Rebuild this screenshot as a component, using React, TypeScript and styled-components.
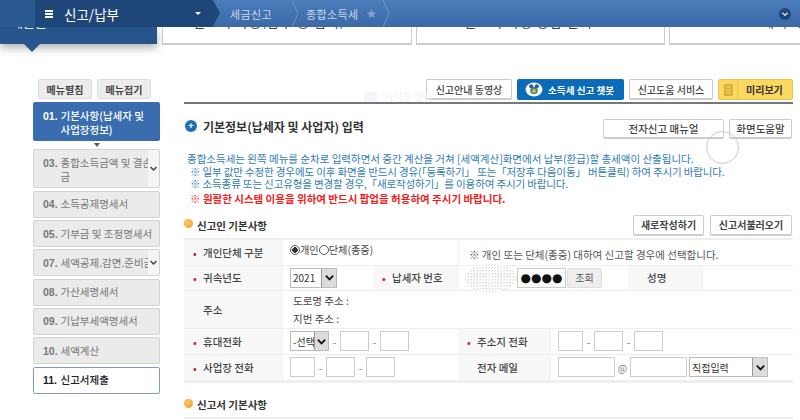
import React from "react";
import styled, { createGlobalStyle } from "styled-components";

const Global = createGlobalStyle`
  html, body { margin: 0; padding: 0; background: #fff; }
  body { font-family: "Noto Sans CJK KR", "Noto Sans", sans-serif; color: #333; }
  * { box-sizing: border-box; }
`;

const Page = styled.div`
  position: relative;
  width: 800px;
  height: 420px;
  overflow: hidden;
  background: #fff;
`;

const TopBar = styled.header`
  height: 27px;
  display: flex;
  align-items: center;
  background: linear-gradient(#4a7dba, #3a69a6);
  color: #fff;
  position: relative;
  z-index: 2;
`;
const Edge = styled.div`
  width: 35px;
  height: 100%;
  background: #2a5a90;
`;
const MenuTitle = styled.div`
  width: 178px;
  height: 100%;
  padding-left: 10px;
  display: flex;
  align-items: center;
  gap: 11px;
  background: #1f4678;
  font-size: 13.5px;
  position: relative;
  &::after {
    content: "";
    position: absolute;
    left: 178px;
    top: 0;
    border-left: 7px solid #1f4678;
    border-top: 13.5px solid transparent;
    border-bottom: 13.5px solid transparent;
  }
`;
const Burger = styled.span`
  width: 8px;
  height: 8px;
  border-top: 2px solid #fff;
  border-bottom: 2px solid #fff;
  position: relative;
  &::after {
    content: "";
    position: absolute;
    left: 0;
    right: 0;
    top: 1px;
    height: 2px;
    background: #fff;
  }
`;
const Caret = styled.span`
  margin-left: auto;
  margin-right: 12px;
  border-top: 3px solid #fff;
  border-left: 3px solid transparent;
  border-right: 3px solid transparent;
`;
const Crumb = styled.div<{ $w: number; $pad: number }>`
  width: ${(p) => p.$w}px;
  height: 100%;
  display: flex;
  align-items: center;
  padding-left: ${(p) => p.$pad}px;
  gap: 7px;
  color: #c9d8ea;
  font-size: 11px;
  letter-spacing: 0.4px;
  flex: none;
`;
const Sep = styled.svg`
  display: block;
  flex: none;
`;
const ToggleDot = styled.div`
  margin-left: auto;
  margin-right: 9px;
  width: 12px;
  height: 12px;
  border-radius: 50%;
  background: #1f4678;
  display: flex;
  align-items: center;
  justify-content: center;
`;

const StepRow = styled.div`
  height: 18px;
  display: flex;
  gap: 4px;
`;
const BlueStep = styled.div`
  position: relative;
  width: 157px;
  height: 17px;
  flex: none;
  margin-right: 1px;
  background: #27548a;
  box-shadow: 0 4px 8px rgba(0, 0, 0, 0.3);
  color: #fff;
  font-size: 13px;
  &::after {
    content: "";
    position: absolute;
    left: 24px;
    bottom: -8px;
    border-top: 8px solid #27548a;
    border-left: 8px solid transparent;
    border-right: 8px solid transparent;
  }
`;
const Clip = styled.div<{ $pad: number }>`
  height: 100%;
  overflow: hidden;
  line-height: 16px;
  padding-left: ${(p) => p.$pad}px;
  white-space: nowrap;
  & > span {
    display: block;
    margin-top: -13px;
  }
`;
const StepCard = styled.div<{ $w: number }>`
  width: ${(p) => p.$w}px;
  flex: none;
  height: 18px;
  border: 1px solid #ccc;
  border-top: 0;
  border-bottom-width: 2px;
  color: #444;
  font-size: 13px;
  letter-spacing: 1px;
`;

const Body = styled.div`
  display: flex;
  padding-left: 33px;
  gap: 24px;
  margin-top: 34px;
`;
const Sidebar = styled.aside`
  width: 127px;
  flex: none;
`;
const SideTools = styled.div`
  display: flex;
  gap: 5px;
  padding-left: 5px;
  margin-bottom: 2.5px;
`;
const SideTool = styled.div`
  width: 54px;
  height: 20px;
  background: #ececec;
  border: 1px solid #ddd;
  border-radius: 2px;
  display: flex;
  align-items: center;
  justify-content: center;
  font-size: 10px;
  font-weight: 700;
  color: #444;
`;
const MenuList = styled.div`
  display: flex;
  flex-direction: column;
  gap: 2.3px;
`;
const Item = styled.div<{ $kind?: "active" | "current"; $two?: boolean }>`
  position: relative;
  height: ${(p) => (p.$two ? 39 : 27)}px;
  flex: none;
  border-radius: 2px;
  display: flex;
  align-items: center;
  padding-left: 9px;
  padding-top: ${(p) => (p.$two ? 3 : 0)}px;
  overflow: hidden;
  font-size: 10.5px;
  line-height: 14px;
  background: ${(p) => (p.$kind === "active" ? "#3a6cb0" : p.$kind === "current" ? "#fff" : "#ebebeb")};
  border: 1px solid ${(p) => (p.$kind === "active" ? "#3a6cb0" : p.$kind === "current" ? "#7d9ccb" : "#d2d2d2")};
  color: ${(p) => (p.$kind === "active" ? "#fff" : p.$kind === "current" ? "#222" : "#777")};
  ${(p) => (p.$kind === "current" || p.$kind === "active" ? "font-weight:500;" : "")}
`;
const ItemNum = styled.b<{ $two?: boolean }>`
  flex: none;
  width: 17.5px;
  align-self: flex-start;
  margin-top: ${(p) => (p.$two ? 3 : 5.5)}px;
  font-family: "Liberation Sans", sans-serif;
  font-size: 10.5px;
`;
const ItemText = styled.span<{ $nowrap?: boolean; $breakAll?: boolean }>`
  white-space: ${(p) => (p.$nowrap ? "nowrap" : "normal")};
  word-break: ${(p) => (p.$breakAll ? "break-all" : "keep-all")};
  width: 97px;
  flex: none;
`;
const Expand = styled.div`
  position: absolute;
  right: 0;
  top: 0;
  bottom: 0;
  width: 11px;
  background: #f5f5f5;
  display: flex;
  align-items: center;
  justify-content: center;
`;
const DownArrow = styled.div`
  height: 4.4px;
  flex: none;
  display: flex;
  justify-content: center;
  align-items: center;
  &::after {
    content: "";
    border-top: 4px solid #555;
    border-left: 3.5px solid transparent;
    border-right: 3.5px solid transparent;
  }
`;

const Main = styled.main`
  width: 609px;
  flex: none;
`;
const ActionBar = styled.div`
  display: flex;
  justify-content: flex-end;
  gap: 5px;
  padding-bottom: 2px;
  border-bottom: 2px solid #777;
`;
const Btn = styled.div<{ $w: number; $h?: number; $bold?: boolean; $fs?: number }>`
  width: ${(p) => p.$w}px;
  height: ${(p) => p.$h ?? 21}px;
  flex: none;
  display: flex;
  align-items: center;
  justify-content: center;
  background: #fff;
  border: 1px solid #ccc;
  border-bottom-width: 2px;
  border-radius: 2px;
  font-size: ${(p) => p.$fs ?? 10}px;
  font-weight: ${(p) => (p.$bold ? 700 : 500)};
  color: #444;
  white-space: nowrap;
`;
const ChatBtn = styled.div`
  width: 107px;
  height: 21px;
  flex: none;
  display: flex;
  align-items: center;
  gap: 5px;
  padding-left: 8px;
  background: #0a6bb8;
  border-radius: 2px;
  color: #fff;
  font-size: 9.6px;
  font-weight: 700;
  white-space: nowrap;
`;
const PreviewBtn = styled.div`
  width: 75px;
  height: 21px;
  flex: none;
  display: flex;
  align-items: center;
  background: #fbd95f;
  border: 1px solid #e8c34f;
  border-radius: 2px;
  font-size: 10px;
  font-weight: 700;
  color: #333;
`;
const PreviewIcon = styled.div`
  width: 19px;
  height: 100%;
  flex: none;
  display: flex;
  align-items: center;
  justify-content: center;
  border-right: 1px solid #e8c34f;
  margin-right: 8px;
`;

const TitleRow = styled.div`
  display: flex;
  align-items: center;
  height: 40px;
  padding-top: 4px;
`;
const Title = styled.h2`
  margin: 0 0 0 6px;
  font-size: 12px;
  font-weight: 700;
  color: #333;
`;
const BlueBullet = styled.span`
  width: 12px;
  height: 12px;
  margin-left: 1px;
  border-radius: 50%;
  background: #1c6fb4;
  display: flex;
  align-items: center;
  justify-content: center;
  color: #fff;
  font-size: 9px;
  line-height: 1;
  font-weight: 700;
  font-family: "Liberation Sans", sans-serif;
`;
const ManualBtns = styled.div`
  margin-left: auto;
  margin-right: 1px;
  display: flex;
  gap: 5px;
  align-self: flex-start;
  margin-top: 11px;
`;
const Notes = styled.div`
  margin-top: 9px;
  padding-left: 3px;
  font-size: 10.5px;
  line-height: 12.5px;
  color: #2f7cb3;
  white-space: nowrap;
`;
const Note = styled.div<{ $indent?: boolean }>`
  padding-left: ${(p) => (p.$indent ? 3 : 0)}px;
  letter-spacing: ${(p) => (p.$indent ? "-0.14px" : "0")};
`;
const RedNote = styled.div`
  margin-top: 1px;
  padding-left: 3px;
  color: #f01c1c;
  font-weight: 700;
  font-size: 10.5px;
  line-height: 14px;
`;
const SectionRow = styled.div`
  display: flex;
  align-items: center;
  height: 21px;
  margin-top: 9px;
`;
const OrangeBullet = styled.span`
  width: 9px;
  height: 9px;
  border-radius: 50%;
  flex: none;
  background: radial-gradient(circle at 40% 40%, #ffc66a, #ee9a1c);
  margin: -3px 4px 0 0;
`;
const SectionTitle = styled.h3`
  margin: 0;
  font-size: 10.5px;
  font-weight: 700;
  color: #333;
`;
const SectionBtns = styled.div`
  margin-left: auto;
  margin-right: 1px;
  display: flex;
  gap: 6px;
`;
const Table = styled.div`
  margin-top: 2px;
  display: grid;
  grid-template-columns: 98px 91px 85px 92px 78px 74px 91px;
  grid-template-rows: 26px 25px 38px 26px 26px;
  border-top: 2px solid #eee;
  border-bottom: 2px solid #eee;
  font-size: 10.5px;
  color: #444;
`;
const Label = styled.div<{ $plain?: boolean }>`
  display: flex;
  align-items: center;
  background: #f8f8f8;
  border-bottom: 1px solid #eee;
  padding-left: ${(p) => (p.$plain ? 19 : 9)}px;
  font-weight: 500;
  white-space: nowrap;
  color: #444;
`;
const Req = styled.span`
  width: 10px;
  flex: none;
  color: #e0202a;
  font-size: 10px;
  font-weight: 700;
`;
const Cell = styled.div<{ $span?: number; $stack?: boolean; $pad?: number; $gap?: number }>`
  grid-column: span ${(p) => p.$span ?? 1};
  display: flex;
  flex-direction: ${(p) => (p.$stack ? "column" : "row")};
  align-items: ${(p) => (p.$stack ? "flex-start" : "center")};
  justify-content: ${(p) => (p.$stack ? "center" : "flex-start")};
  padding-left: ${(p) => p.$pad ?? 7}px;
  gap: ${(p) => p.$gap ?? 2}px;
  border-bottom: 1px solid #eee;
  border-left: 1px solid #f2f2f2;
  white-space: nowrap;
  min-width: 0;
`;
const Radio = styled.span<{ $on?: boolean }>`
  width: 10px;
  height: 10px;
  flex: none;
  border-radius: 50%;
  border: 1px solid #555;
  background: ${(p) => (p.$on ? "radial-gradient(circle, #333 0 2.6px, #fff 3px)" : "#fff")};
`;
const RadioGroup = styled.div`
  display: flex;
  align-items: center;
  margin-top: -5px;
  font-size: 10.2px;
`;
const Hint = styled.span`
  font-size: 10.5px;
  color: #555;
  margin-top: 4px;
  padding-left: 3px;
`;
const Box = styled.div<{ $w: number }>`
  width: ${(p) => p.$w}px;
  height: 20px;
  flex: none;
  border: 1px solid #ccc;
  background: #fff;
`;
const Dash = styled.span<{ $w?: number }>`
  color: #777;
  font-size: 10px;
  width: ${(p) => p.$w ?? 7}px;
  text-align: center;
  flex: none;
`;
const Select = styled.div<{ $w: number }>`
  width: ${(p) => p.$w}px;
  height: 20px;
  flex: none;
  display: flex;
  align-items: center;
  border: 1px solid #bbb;
  background: #fff;
  padding-left: 2px;
  font-size: 10px;
  color: #333;
  overflow: hidden;
`;
const SelectText = styled.span`
  flex: 1;
  min-width: 0;
  overflow: hidden;
  white-space: nowrap;
`;
const SelectBtn = styled.div<{ $w?: number }>`
  width: ${(p) => p.$w ?? 15}px;
  height: 100%;
  flex: none;
  background: #dcdcdc;
  border-left: 1px solid #999;
  display: flex;
  align-items: center;
  justify-content: center;
`;
const Dots = styled.svg`
  flex: none;
  display: block;
`;
const MaskedInput = styled.div`
  width: 49px;
  height: 20px;
  flex: none;
  margin-left: -1px;
  border: 1px solid #ccc;
  background: #fff;
  display: flex;
  align-items: center;
  justify-content: center;
  color: #111;
  font-size: 12px;
  letter-spacing: 0;
  font-family: "DejaVu Sans", sans-serif;
`;
const LookupBtn = styled.div`
  width: 35px;
  height: 20px;
  flex: none;
  display: flex;
  align-items: center;
  justify-content: center;
  background: #eee;
  border: 1px solid #ddd;
  border-radius: 2px;
  font-size: 10px;
  color: #555;
`;
const Section2 = styled.div`
  margin-top: 14px;
  display: flex;
  align-items: center;
  padding-bottom: 4px;
  border-bottom: 2px solid #eee;
  height: 22px;
`;
const Ripple = styled.div`
  position: absolute;
  left: 706px;
  top: 131px;
  width: 33px;
  height: 33px;
  border-radius: 50%;
  border: 1px solid #c3cad8;
`;
const Ghost = styled.div`
  position: absolute;
  left: 364px;
  top: 92px;
  height: 10px;
  display: flex;
  align-items: center;
  gap: 7px;
  font-size: 10px;
  line-height: 10px;
  color: #f0f3f8;
  &::before {
    content: "";
    width: 13px;
    height: 10px;
    background: #f2f6fb;
  }
`;

const Chevron = ({ size = 11, color = "#111", w = 2 }: { size?: number; color?: string; w?: number }) => (
  <svg width={size} height={size} viewBox="0 0 12 12">
    <path d="M2 4l4 4 4-4" fill="none" stroke={color} strokeWidth={w} />
  </svg>
);

const CrumbSep = () => (
  <Sep width="7" height="27" viewBox="0 0 7 27">
    <path d="M0 0l6 13.5L0 27" fill="none" stroke="#6f97c8" strokeWidth="1" />
  </Sep>
);

const Req1 = () => <Req>•</Req>;

const Masked = () => (
  <Dots width="52" height="28" viewBox="0 0 52 28">
    <defs>
      <pattern id="noise" width="3" height="3" patternUnits="userSpaceOnUse">
        <rect width="3" height="3" fill="#fff" />
        <rect width="1" height="1" fill="#cfcfcf" />
        <rect x="2" y="1" width="1" height="1" fill="#e2e2e2" />
      </pattern>
    </defs>
    <ellipse cx="26" cy="14" rx="26" ry="14" fill="url(#noise)" />
  </Dots>
);

const menu = [
  { n: "04.", t: "소득공제명세서" },
  { n: "05.", t: "기부금 및 조정명세서" },
];
const menu2 = [
  { n: "08.", t: "가산세명세서" },
  { n: "09.", t: "기납부세액명세서" },
  { n: "10.", t: "세액계산" },
];

export default function App() {
  return (
    <Page>
      <Global />
      <TopBar>
        <Edge />
        <MenuTitle>
          <Burger />
          신고/납부
          <Caret />
        </MenuTitle>
        <Crumb $w={79} $pad={17}>세금신고</Crumb>
        <CrumbSep />
        <Crumb $w={84} $pad={7}>
          종합소득세
          <svg width="11" height="11" viewBox="0 0 24 24">
            <path d="M12 2l3 7 7.5.6-5.7 4.9 1.8 7.3L12 18l-6.6 3.8 1.8-7.3L1.5 9.6 9 9z" fill="#7fa0c8" />
          </svg>
        </Crumb>
        <CrumbSep />
        <ToggleDot>
          <Chevron size={8} color="#d5e0ee" w={2} />
        </ToggleDot>
      </TopBar>
      <StepRow>
        <BlueStep>
          <Clip $pad={11}>
            <span>세글글</span>
          </Clip>
        </BlueStep>
        <StepCard $w={250}>
          <Clip $pad={30}>
            <span>신고서 작성(납부 등 입력)</span>
          </Clip>
        </StepCard>
        <StepCard $w={249}>
          <Clip $pad={47}>
            <span>신고서 작성 방법 선택</span>
          </Clip>
        </StepCard>
        <StepCard $w={150}>
          <Clip $pad={92}>
            <span>세액 계산</span>
          </Clip>
        </StepCard>
      </StepRow>
      <Body>
        <Sidebar>
          <SideTools>
            <SideTool>메뉴펼침</SideTool>
            <SideTool>메뉴접기</SideTool>
          </SideTools>
          <MenuList>
            <Item $kind="active" $two>
              <ItemNum $two>01.</ItemNum>
              <ItemText>기본사항(납세자 및 사업장정보)</ItemText>
            </Item>
            <DownArrow />
            <Item $two>
              <ItemNum $two>03.</ItemNum>
              <ItemText $breakAll>종합소득금액 및 결손금</ItemText>
              <Expand>
                <Chevron size={9} color="#444" w={2} />
              </Expand>
            </Item>
            {menu.map((m) => (
              <Item key={m.n}>
                <ItemNum>{m.n}</ItemNum>
                <ItemText>{m.t}</ItemText>
              </Item>
            ))}
            <Item>
              <ItemNum>07.</ItemNum>
              <ItemText $nowrap>세액공제.감면.준비금</ItemText>
              <Expand>
                <Chevron size={9} color="#444" w={2} />
              </Expand>
            </Item>
            {menu2.map((m) => (
              <Item key={m.n}>
                <ItemNum>{m.n}</ItemNum>
                <ItemText>{m.t}</ItemText>
              </Item>
            ))}
            <Item $kind="current">
              <ItemNum>11.</ItemNum>
              <ItemText>신고서제출</ItemText>
            </Item>
          </MenuList>
        </Sidebar>
        <Main>
          <ActionBar>
            <Btn $w={86}>신고안내 동영상</Btn>
            <ChatBtn>
              <svg width="18" height="15" viewBox="0 0 18 16">
                <ellipse cx="9" cy="8" rx="9" ry="7.5" fill="#fff" />
                <circle cx="9" cy="9" r="4" fill="#3d8f6f" />
                <circle cx="6" cy="4.5" r="2.2" fill="#2a5aa8" />
                <circle cx="12" cy="4.5" r="2.2" fill="#2a5aa8" />
                <circle cx="9" cy="9.5" r="2" fill="#e8b93a" />
              </svg>
              소득세 신고 챗봇
            </ChatBtn>
            <Btn $w={84}>신고도움 서비스</Btn>
            <PreviewBtn>
              <PreviewIcon>
                <svg width="9" height="12" viewBox="0 0 9 12">
                  <rect width="9" height="12" fill="#d9b23a" />
                  <path d="M2 3h5M2 6h5M2 9h5" stroke="#f3d36c" />
                </svg>
              </PreviewIcon>
              미리보기
            </PreviewBtn>
          </ActionBar>
          <TitleRow>
            <BlueBullet>+</BlueBullet>
            <Title>기본정보(납세자 및 사업자) 입력</Title>
            <ManualBtns>
              <Btn $w={121} $h={20} $fs={10.5}>전자신고 매뉴얼</Btn>
              <Btn $w={63} $h={20} $fs={10.5}>화면도움말</Btn>
            </ManualBtns>
          </TitleRow>
          <Notes>
            <Note>종합소득세는 왼쪽 메뉴를 순차로 입력하면서 중간 계산을 거쳐 [세액계산]화면에서 납부(환급)할 총세액이 산출됩니다.</Note>
            <Note $indent>※ 일부 값만 수정한 경우에도 이후 화면을 반드시 경유(「등록하기」 또는「저장후 다음이동」 버튼클릭) 하여 주시기 바랍니다.</Note>
            <Note $indent>※ 소득종류 또는 신고유형을 변경할 경우,「새로작성하기」를 이용하여 주시기 바랍니다.</Note>
            <RedNote>※ 원활한 시스템 이용을 위하여 반드시 팝업을 허용하여 주시기 바랍니다.</RedNote>
          </Notes>
          <SectionRow>
            <OrangeBullet />
            <SectionTitle>신고인 기본사항</SectionTitle>
            <SectionBtns>
              <Btn $w={71} $bold>새로작성하기</Btn>
              <Btn $w={82} $bold>신고서불러오기</Btn>
            </SectionBtns>
          </SectionRow>
          <Table>
            <Label><Req1 />개인단체 구분</Label>
            <Cell $span={2}>
              <RadioGroup>
                <Radio $on />개인<Radio />단체(종중)
              </RadioGroup>
            </Cell>
            <Cell $span={4}>
              <Hint>※ 개인 또는 단체(종중) 대하여 신고할 경우에 선택합니다.</Hint>
            </Cell>

            <Label><Req1 />귀속년도</Label>
            <Cell>
              <Select $w={47}>
                <SelectText>2021</SelectText>
                <SelectBtn><Chevron /></SelectBtn>
              </Select>
            </Cell>
            <Label><Req1 />납세자 번호</Label>
            <Cell $span={2} $pad={6} $gap={1}>
              <Masked />
              <MaskedInput>●●●●</MaskedInput>
              <LookupBtn>조회</LookupBtn>
            </Cell>
            <Label $plain>성명</Label>
            <Cell />

            <Label $plain>주소</Label>
            <Cell $span={6} $stack $pad={10} $gap={3}>
              <span>도로명 주소 :</span>
              <span>지번 주소 :</span>
            </Cell>

            <Label><Req1 />휴대전화</Label>
            <Cell $span={2}>
              <Select $w={39}>
                <SelectText>-선택</SelectText>
                <SelectBtn $w={14}><Chevron /></SelectBtn>
              </Select>
              <Dash>-</Dash>
              <Box $w={29} />
              <Dash>-</Dash>
              <Box $w={29} />
            </Cell>
            <Label><Req1 />주소지 전화</Label>
            <Cell $span={3}>
              <Box $w={25} />
              <Dash>-</Dash>
              <Box $w={29} />
              <Dash>-</Dash>
              <Box $w={29} />
            </Cell>

            <Label><Req1 />사업장 전화</Label>
            <Cell $span={2}>
              <Box $w={25} />
              <Dash>-</Dash>
              <Box $w={29} />
              <Dash>-</Dash>
              <Box $w={29} />
            </Cell>
            <Label $plain>전자 메일</Label>
            <Cell $span={3}>
              <Box $w={57} />
              <Dash $w={11}>@</Dash>
              <Box $w={57} />
              <Select $w={79}>
                <SelectText>직접입력</SelectText>
                <SelectBtn><Chevron /></SelectBtn>
              </Select>
            </Cell>
          </Table>
          <Section2>
            <OrangeBullet />
            <SectionTitle>신고서 기본사항</SectionTitle>
          </Section2>
        </Main>
      </Body>
      <Ghost>사각형 캡처</Ghost>
      <Ripple />
    </Page>
  );
}
